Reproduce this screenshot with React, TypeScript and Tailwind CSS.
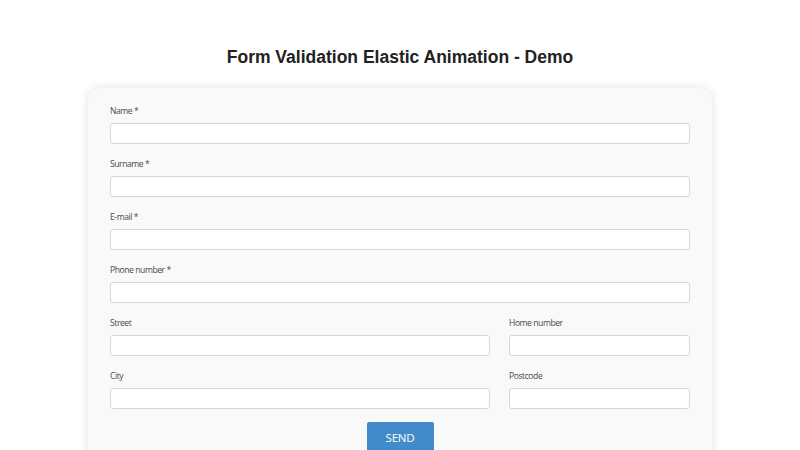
const fields = [
  { label: 'Name *' },
  { label: 'Surname *' },
  { label: 'E-mail *' },
  { label: 'Phone number *' },
]

function Field({ label, className = '' }: { label: string; className?: string }) {
  return (
    <div className={`flex flex-col ${className}`}>
      <label className="mb-[6px] block text-[8.6px] leading-[12px] tracking-[-0.45px] text-[#4a4a4a]">
        {label}
      </label>
      <input
        type="text"
        className="h-[21px] w-full rounded-[3px] border border-[#d6d6d6] bg-white outline-none"
      />
    </div>
  )
}

export default function App() {
  return (
    <div className="min-h-screen bg-white font-['Open_Sans',sans-serif]">
      <h1 className="pt-[45px] text-center font-['Liberation_Sans',Arial,sans-serif] text-[17.5px] leading-[24px] font-bold text-[#222]">
        Form Validation Elastic Animation - Demo
      </h1>
      <div className="mx-auto mt-[19px] w-[624px] rounded-[12px] bg-[#f9f9f9] px-[22px] pt-[17px] pb-[30px] shadow-[0_0_10px_rgba(0,0,0,0.12)]">
        <form className="flex flex-col gap-[14px]">
          {fields.map((f) => (
            <Field key={f.label} label={f.label} />
          ))}
          <div className="flex gap-[19px]">
            <Field label="Street" className="w-[380px]" />
            <Field label="Home number" className="flex-1" />
          </div>
          <div className="flex gap-[19px]">
            <Field label="City" className="w-[380px]" />
            <Field label="Postcode" className="flex-1" />
          </div>
          <div className="flex justify-center">
            <button
              type="button"
              className="-mt-px h-[31px] w-[67px] rounded-[2px] bg-[#428bca] text-[11.5px] tracking-[-0.2px] text-white"
            >
              SEND
            </button>
          </div>
        </form>
      </div>
    </div>
  )
}
